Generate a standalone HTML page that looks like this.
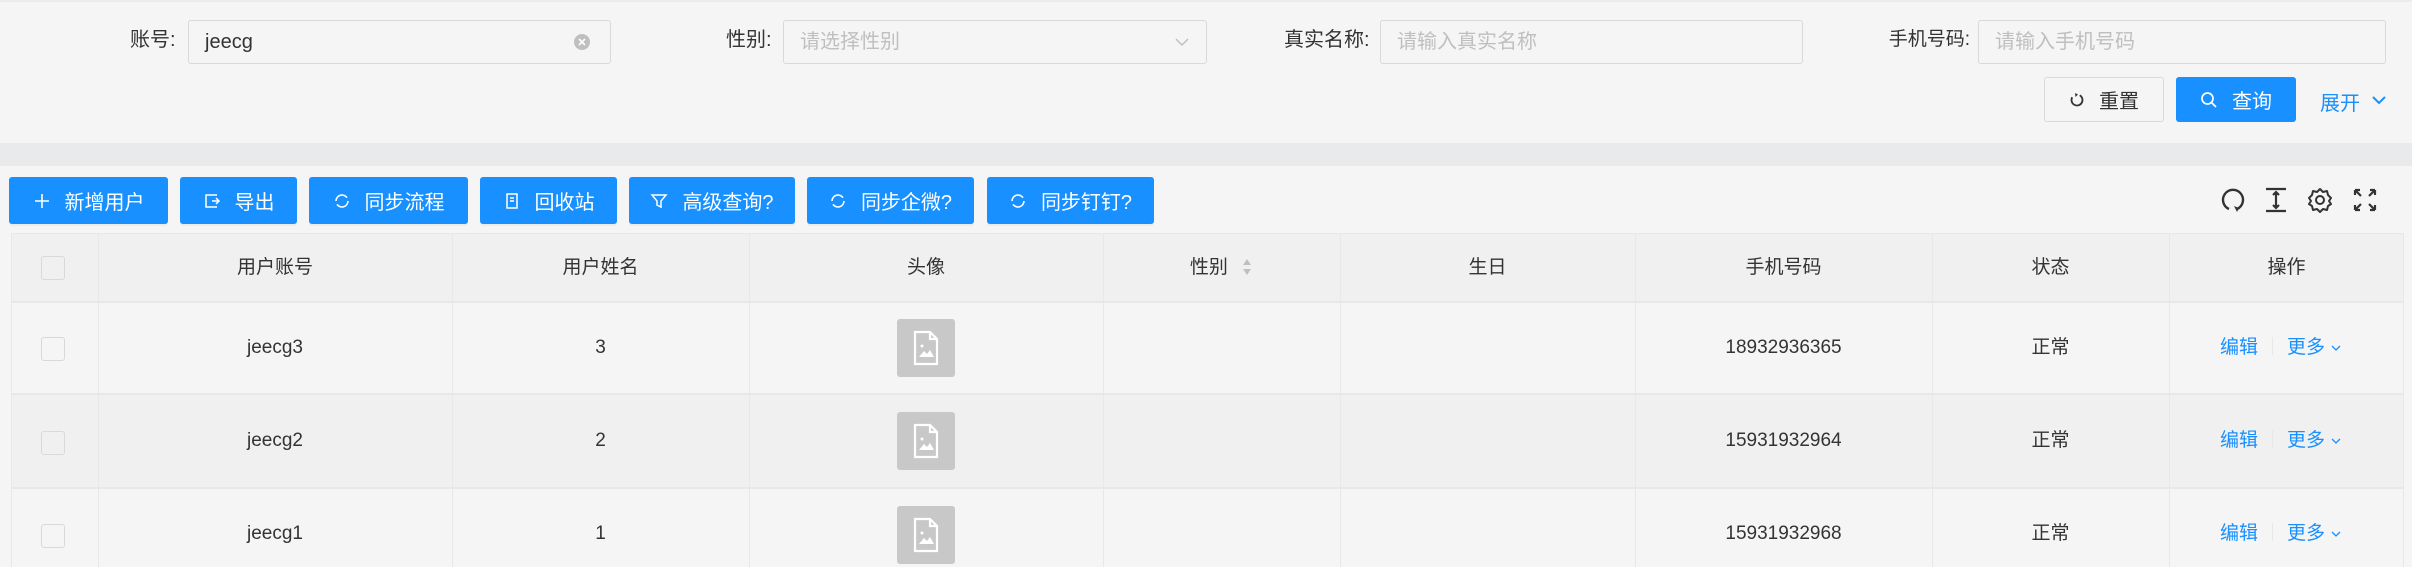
<!DOCTYPE html>
<html><head><meta charset="utf-8">
<style>
*{box-sizing:border-box;margin:0;padding:0}
body{width:2412px;height:567px;overflow:hidden;background:#f5f5f5;font-family:"Liberation Sans","Noto Sans CJK SC",sans-serif;font-size:20px;color:#333;position:relative}
.a{position:absolute;white-space:nowrap}
.lbl{position:absolute;top:28px;font-size:20px;color:#333;white-space:nowrap;line-height:24px;z-index:2}
.inp{position:absolute;top:20px;height:44px;border:1px solid #d9d9d9;border-radius:3px;background:#f5f5f5;padding-left:16px;line-height:42px;color:#bfbfbf;white-space:nowrap}
.btn{position:absolute;top:177px;height:47px;background:#1890ff;border-radius:3px;color:#fff;display:flex;align-items:center;justify-content:center;gap:14px;font-size:20px;box-shadow:0 2px 0 rgba(0,0,0,.04);white-space:nowrap}
.btn svg{width:18px;height:18px}
.vl{position:absolute;top:233px;bottom:0;width:1px;background:#e8e8e8}
.hl{position:absolute;left:11px;right:8px;height:2px;background:#e8e8e8}
.c{position:absolute;text-align:center;font-size:19px;line-height:24px;white-space:nowrap}
.cb{position:absolute;left:41px;width:24px;height:24px;border:1px solid #d9d9d9;border-radius:3px}
.av{position:absolute;left:897px;width:58px;height:58px;background:#c8c8c8;border-radius:3px;display:flex;align-items:center;justify-content:center}
.op{position:absolute;left:2220px;color:#1890ff;font-size:19px;line-height:24px;white-space:nowrap}
</style></head><body>
<div class="a" style="left:0;top:0;width:2412px;height:143px;background:#f5f5f5;border-top:2px solid #ececec"></div>
<div class="a" style="left:0;top:143px;width:2412px;height:23px;background:#e9eaec"></div>

<div class="lbl" style="left:130px">账号:</div>
<div class="inp" style="left:188px;width:423px;color:#333">jeecg
<svg class="a" style="right:20px;top:13px" width="16" height="16" viewBox="0 0 16 16"><circle cx="8" cy="8" r="8" fill="#bfbfbf"/><path d="M5 5l6 6M11 5l-6 6" stroke="#fff" stroke-width="1.6"/></svg></div>
<div class="lbl" style="left:726px">性别:</div>
<div class="inp" style="left:783px;width:424px">请选择性别
<svg class="a" style="right:16px;top:15px" width="16" height="12" viewBox="0 0 16 12"><path d="M2 3l6 6 6-6" stroke="#bfbfbf" stroke-width="1.4" fill="none"/></svg></div>
<div class="lbl" style="left:1284px">真实名称:</div>
<div class="inp" style="left:1380px;width:423px">请输入真实名称</div>
<div class="lbl" style="left:1860px;width:110px;text-align:right;font-size:19px">手机号码:</div>
<div class="inp" style="left:1978px;width:408px">请输入手机号码</div>

<div class="a" style="left:2044px;top:77px;width:120px;height:45px;border:1px solid #d9d9d9;border-radius:3px;display:flex;align-items:center;justify-content:center;gap:14px;color:#333">
<svg width="16" height="16" viewBox="0 0 16 16"><path d="M8 2.5A5.5 5.5 0 1 0 13.5 8" stroke="#333" stroke-width="1.8" fill="none" transform="rotate(-60 8 8)"/><path d="M6 1l3 1.5-2.5 2.5z" fill="#333"/></svg>重置</div>
<div class="a" style="left:2176px;top:77px;width:120px;height:45px;background:#1890ff;border-radius:3px;display:flex;align-items:center;justify-content:center;gap:14px;color:#fff">
<svg width="18" height="18" viewBox="0 0 18 18"><circle cx="7.5" cy="7.5" r="5.5" stroke="#fff" stroke-width="1.7" fill="none"/><path d="M11.5 11.5l4.5 4.5" stroke="#fff" stroke-width="1.7"/></svg>查询</div>
<div class="a" style="left:2320px;top:87px;color:#1890ff">展开</div>
<svg class="a" style="left:2371px;top:94px" width="16" height="12" viewBox="0 0 16 12"><path d="M2 3l6 6 6-6" stroke="#1890ff" stroke-width="2" fill="none"/></svg>

<div class="btn" style="left:9px;width:159px"><svg viewBox="0 0 18 18"><path d="M9 2v14M2 9h14" stroke="#fff" stroke-width="1.6"/></svg>新增用户</div>
<div class="btn" style="left:180px;width:117px"><svg viewBox="0 0 18 18"><path d="M14 3H3v12h11M9 9h7M13 6l3 3-3 3" stroke="#fff" stroke-width="1.5" fill="none"/></svg>导出</div>
<div class="btn" style="left:309px;width:159px"><svg viewBox="0 0 18 18"><path d="M15 9a6 6 0 0 1-11 3.3M3 9a6 6 0 0 1 11-3.3" stroke="#fff" stroke-width="1.6" fill="none"/></svg>同步流程</div>
<div class="btn" style="left:480px;width:137px"><svg viewBox="0 0 18 18"><rect x="4" y="2" width="10" height="14" stroke="#fff" stroke-width="1.5" fill="none"/><path d="M7 6h4M7 9h4" stroke="#fff" stroke-width="1.4"/></svg>回收站</div>
<div class="btn" style="left:629px;width:166px"><svg viewBox="0 0 18 18"><path d="M2 3h14l-5 6v6l-4-2V9z" stroke="#fff" stroke-width="1.5" fill="none"/></svg>高级查询?</div>
<div class="btn" style="left:807px;width:167px"><svg viewBox="0 0 18 18"><path d="M15 9a6 6 0 0 1-11 3.3M3 9a6 6 0 0 1 11-3.3" stroke="#fff" stroke-width="1.6" fill="none"/></svg>同步企微?</div>
<div class="btn" style="left:987px;width:167px"><svg viewBox="0 0 18 18"><path d="M15 9a6 6 0 0 1-11 3.3M3 9a6 6 0 0 1 11-3.3" stroke="#fff" stroke-width="1.6" fill="none"/></svg>同步钉钉?</div>

<svg class="a" style="left:2220px;top:187px" width="26" height="26" viewBox="0 0 26 26"><path d="M9 22A10 10 0 1 1 17 22" stroke="#333" stroke-width="2.4" fill="none"/><path d="M14 19l5 2-2 4z" fill="#333"/></svg>
<svg class="a" style="left:2264px;top:187px" width="24" height="26" viewBox="0 0 24 26"><path d="M2 2h20M2 24h20M12 5v16M9 8l3-3 3 3M9 18l3 3 3-3" stroke="#333" stroke-width="2.2" fill="none"/></svg>
<svg class="a" style="left:2307px;top:187px" width="26" height="26" viewBox="0 0 26 26"><path d="M13 2l3 3 4-1 1 4 3 3-2 3 2 3-3 2-1 4-4-1-3 3-3-3-4 1-1-4-3-2 2-3-2-3 3-3 1-4 4 1z" stroke="#333" stroke-width="2" fill="none" stroke-linejoin="round"/><circle cx="13" cy="13" r="4" stroke="#333" stroke-width="2" fill="none"/></svg>
<svg class="a" style="left:2353px;top:188px" width="24" height="24" viewBox="0 0 24 24"><path d="M2 2l6 6M2 2v5M2 2h5M22 2l-6 6M22 2v5M22 2h-5M2 22l6-6M2 22v-5M2 22h5M22 22l-6-6M22 22v-5M22 22h-5" stroke="#333" stroke-width="2.2" fill="none"/></svg>

<div class="a" style="left:11px;top:233px;width:2393px;height:334px;border:1px solid #e8e8e8;border-bottom:none"></div>
<div class="a" style="left:12px;top:234px;width:2391px;height:68px;background:#f0f0f0"></div>
<div class="a" style="left:12px;top:302px;width:2391px;height:92px;background:#f5f5f5"></div>
<div class="a" style="left:12px;top:394px;width:2391px;height:94px;background:#f0f0f0"></div>
<div class="a" style="left:12px;top:488px;width:2391px;height:79px;background:#f5f5f5"></div>
<div class="hl" style="top:301px"></div><div class="hl" style="top:393px"></div><div class="hl" style="top:487px"></div>
<div class="vl" style="left:98px"></div><div class="vl" style="left:452px"></div><div class="vl" style="left:749px"></div><div class="vl" style="left:1103px"></div><div class="vl" style="left:1340px"></div><div class="vl" style="left:1635px"></div><div class="vl" style="left:1932px"></div><div class="vl" style="left:2169px"></div>

<div class="cb" style="top:256px"></div>
<div class="c" style="left:98px;width:354px;top:256px">用户账号</div>
<div class="c" style="left:452px;width:297px;top:256px">用户姓名</div>
<div class="c" style="left:749px;width:354px;top:256px">头像</div>
<div class="c" style="left:1103px;width:237px;top:256px">性别 <svg width="12" height="20" viewBox="0 0 12 20" style="vertical-align:-4px;margin-left:8px"><path d="M6 2l4 6H2zM6 18l4-6H2z" fill="#bfbfbf"/></svg></div>
<div class="c" style="left:1340px;width:295px;top:256px">生日</div>
<div class="c" style="left:1635px;width:297px;top:256px">手机号码</div>
<div class="c" style="left:1932px;width:237px;top:256px">状态</div>
<div class="c" style="left:2169px;width:235px;top:256px">操作</div>

<div class="cb" style="top:337px"></div>
<div class="c" style="left:98px;width:354px;top:336px">jeecg3</div>
<div class="c" style="left:452px;width:297px;top:336px">3</div>
<div class="c" style="left:1635px;width:297px;top:336px">18932936365</div>
<div class="c" style="left:1932px;width:237px;top:336px">正常</div>
<div class="av" style="top:319px"><svg width="28" height="38" viewBox="0 0 28 38"><path d="M3 3h15l7 7v25H3z M18 3v7h7" stroke="#fff" stroke-width="2.2" fill="none"/><circle cx="10" cy="17" r="1.5" fill="#fff"/><path d="M7 28l5-6 3 3 3-4 4 7z" fill="#fff"/></svg></div>
<div class="op" style="top:336px">编辑<span style="display:inline-block;width:1px;height:18px;background:#e8e8e8;margin:0 14px;vertical-align:-2px"></span>更多 <svg width="12" height="10" viewBox="0 0 12 10"><path d="M2 3l4 4 4-4" stroke="#1890ff" stroke-width="1.3" fill="none"/></svg></div>

<div class="cb" style="top:431px"></div>
<div class="c" style="left:98px;width:354px;top:429px">jeecg2</div>
<div class="c" style="left:452px;width:297px;top:429px">2</div>
<div class="c" style="left:1635px;width:297px;top:429px">15931932964</div>
<div class="c" style="left:1932px;width:237px;top:429px">正常</div>
<div class="av" style="top:412px"><svg width="28" height="38" viewBox="0 0 28 38"><path d="M3 3h15l7 7v25H3z M18 3v7h7" stroke="#fff" stroke-width="2.2" fill="none"/><circle cx="10" cy="17" r="1.5" fill="#fff"/><path d="M7 28l5-6 3 3 3-4 4 7z" fill="#fff"/></svg></div>
<div class="op" style="top:429px">编辑<span style="display:inline-block;width:1px;height:18px;background:#e8e8e8;margin:0 14px;vertical-align:-2px"></span>更多 <svg width="12" height="10" viewBox="0 0 12 10"><path d="M2 3l4 4 4-4" stroke="#1890ff" stroke-width="1.3" fill="none"/></svg></div>

<div class="cb" style="top:524px"></div>
<div class="c" style="left:98px;width:354px;top:522px">jeecg1</div>
<div class="c" style="left:452px;width:297px;top:522px">1</div>
<div class="c" style="left:1635px;width:297px;top:522px">15931932968</div>
<div class="c" style="left:1932px;width:237px;top:522px">正常</div>
<div class="av" style="top:506px"><svg width="28" height="38" viewBox="0 0 28 38"><path d="M3 3h15l7 7v25H3z M18 3v7h7" stroke="#fff" stroke-width="2.2" fill="none"/><circle cx="10" cy="17" r="1.5" fill="#fff"/><path d="M7 28l5-6 3 3 3-4 4 7z" fill="#fff"/></svg></div>
<div class="op" style="top:522px">编辑<span style="display:inline-block;width:1px;height:18px;background:#e8e8e8;margin:0 14px;vertical-align:-2px"></span>更多 <svg width="12" height="10" viewBox="0 0 12 10"><path d="M2 3l4 4 4-4" stroke="#1890ff" stroke-width="1.3" fill="none"/></svg></div>
</body></html>
